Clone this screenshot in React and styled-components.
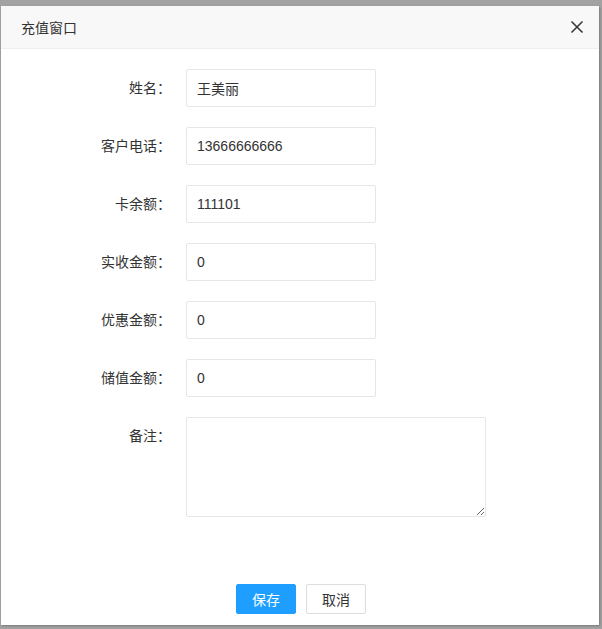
import React from "react";
import styled, { createGlobalStyle } from "styled-components";

const GlobalStyle = createGlobalStyle`
  html, body {
    margin: 0;
    padding: 0;
    background: #a2a2a2;
  }
  body {
    font-family: "Liberation Sans", "Noto Sans CJK SC", sans-serif;
    font-size: 14px;
    color: #333;
  }
`;

const Screen = styled.div`
  width: 602px;
  height: 629px;
  padding: 6px 3px 4px 1px;
  box-sizing: border-box;
`;

const Dialog = styled.div`
  width: 598px;
  height: 619px;
  background: #fff;
  display: flex;
  flex-direction: column;
  box-shadow: 1px 1px 2px rgba(0, 0, 0, 0.25);
`;

const Header = styled.div`
  height: 42px;
  flex: none;
  display: flex;
  align-items: center;
  justify-content: space-between;
  padding: 0 12px 0 20px;
  background: #f8f8f8;
  border-bottom: 1px solid #eee;
`;

const Title = styled.span`
  font-size: 14px;
  color: #333;
`;

const CloseButton = styled.button`
  width: 20px;
  height: 20px;
  padding: 0;
  border: 0;
  background: none;
  display: flex;
  align-items: center;
  justify-content: center;
  cursor: pointer;
`;

const Form = styled.form`
  flex: 1;
  padding: 20px 0 0 75px;
  display: flex;
  flex-direction: column;
  gap: 20px;
`;

const Row = styled.div`
  display: flex;
  align-items: ${(p) => (p.top ? "flex-start" : "center")};
`;

const Label = styled.label`
  width: 80px;
  padding: 9px 15px;
  line-height: 20px;
  text-align: right;
  color: #333;
  flex: none;
`;

const Input = styled.input`
  width: 190px;
  height: 38px;
  box-sizing: border-box;
  padding: 0 10px;
  border: 1px solid #e6e6e6;
  border-radius: 2px;
  font: inherit;
  font-size: 14px;
  color: #333;
  outline: none;
`;

const TextArea = styled.textarea`
  width: 300px;
  height: 100px;
  box-sizing: border-box;
  padding: 6px 10px;
  border: 1px solid #e6e6e6;
  border-radius: 2px;
  font: inherit;
  color: #333;
  outline: none;
`;

const Footer = styled.div`
  flex: none;
  display: flex;
  justify-content: center;
  gap: 10px;
  padding: 0 0 11px 2px;
`;

const Button = styled.button`
  width: 60px;
  height: 30px;
  box-sizing: border-box;
  border-radius: 2px;
  font: inherit;
  font-size: 14px;
  cursor: pointer;
  border: 1px solid ${(p) => (p.primary ? "#1e9fff" : "#dedede")};
  background: ${(p) => (p.primary ? "#1e9fff" : "#fff")};
  color: ${(p) => (p.primary ? "#fff" : "#333")};
`;

const fields = [
  ["姓名：", "王美丽"],
  ["客户电话：", "13666666666"],
  ["卡余额：", "111101"],
  ["实收金额：", "0"],
  ["优惠金额：", "0"],
  ["储值金额：", "0"],
];

const App = () => {
  return (
    <Screen>
      <GlobalStyle />
      <Dialog>
        <Header>
          <Title>充值窗口</Title>
          <CloseButton type="button">
            <svg width="14" height="14" viewBox="0 0 14 14">
              <path d="M1.5 1.5L12.5 12.5M12.5 1.5L1.5 12.5" stroke="#333" strokeWidth="1.5" />
            </svg>
          </CloseButton>
        </Header>
        <Form>
          {fields.map(([label, value]) => (
            <Row key={label}>
              <Label>{label}</Label>
              <Input defaultValue={value} />
            </Row>
          ))}
          <Row top>
            <Label>备注：</Label>
            <TextArea />
          </Row>
        </Form>
        <Footer>
          <Button primary type="button">保存</Button>
          <Button type="button">取消</Button>
        </Footer>
      </Dialog>
    </Screen>
  );
};

export default App;
